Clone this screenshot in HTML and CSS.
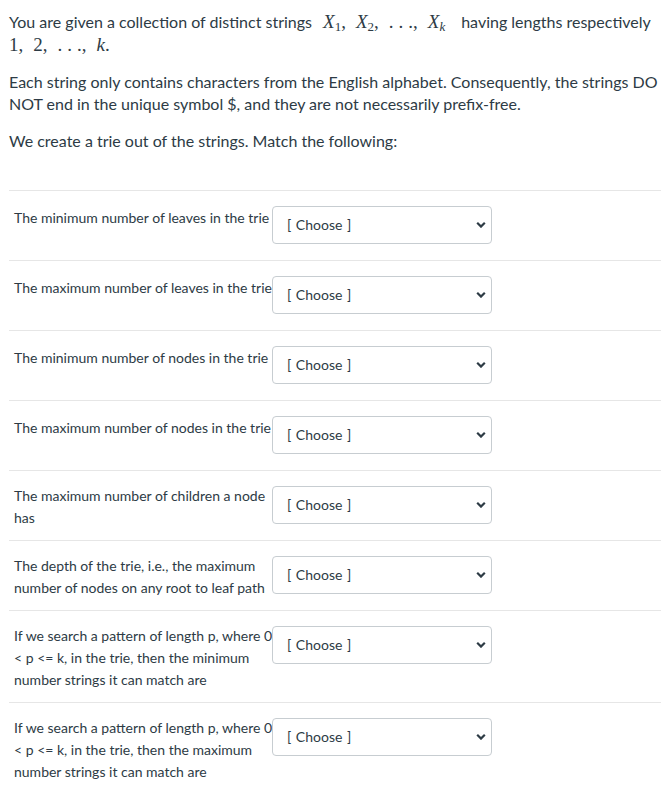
FILE: index.html
```html
<!DOCTYPE html>
<html lang="en">
<head>
<meta charset="utf-8">
<title>Trie matching question</title>
<link rel="stylesheet" href="styles.css">
</head>
<body>
<div class="question">
  <div class="text">
    <p class="first">You are given a collection of distinct strings <span class="math lead"><i>X</i><sub>1</sub><span class="c">,</span><i>X</i><sub>2</sub><span class="c">,</span><span class="dots">..</span>.<span class="c">,</span><i>X</i><sub><i>k</i></sub></span><span class="gap"></span>having lengths respectively <span class="math">1<span class="c">,</span>2<span class="c">,</span><span class="dots">..</span>.<span class="c">,</span><i>k</i>.</span></p>
    <p>Each string only contains characters from the English alphabet. Consequently, the strings DO NOT end in the unique symbol $, and they are not necessarily prefix-free.</p>
    <p>We create a trie out of the strings. Match the following:</p>
  </div>
  <div class="answers">
    <div class="row">
      <label class="lbl one">The minimum number of leaves in the trie</label>
      <div class="sel"><span>[ Choose ]</span><svg viewBox="0 0 10 6" width="10" height="6"><path d="M1.2 0.8 L5 4.6 L8.8 0.8" fill="none" stroke="#2d3b45" stroke-width="2.2"/></svg></div>
    </div>
    <div class="row">
      <label class="lbl one">The maximum number of leaves in the trie</label>
      <div class="sel"><span>[ Choose ]</span><svg viewBox="0 0 10 6" width="10" height="6"><path d="M1.2 0.8 L5 4.6 L8.8 0.8" fill="none" stroke="#2d3b45" stroke-width="2.2"/></svg></div>
    </div>
    <div class="row">
      <label class="lbl one">The minimum number of nodes in the trie</label>
      <div class="sel"><span>[ Choose ]</span><svg viewBox="0 0 10 6" width="10" height="6"><path d="M1.2 0.8 L5 4.6 L8.8 0.8" fill="none" stroke="#2d3b45" stroke-width="2.2"/></svg></div>
    </div>
    <div class="row">
      <label class="lbl one">The maximum number of nodes in the trie</label>
      <div class="sel"><span>[ Choose ]</span><svg viewBox="0 0 10 6" width="10" height="6"><path d="M1.2 0.8 L5 4.6 L8.8 0.8" fill="none" stroke="#2d3b45" stroke-width="2.2"/></svg></div>
    </div>
    <div class="row">
      <label class="lbl">The maximum number of children a node has</label>
      <div class="sel"><span>[ Choose ]</span><svg viewBox="0 0 10 6" width="10" height="6"><path d="M1.2 0.8 L5 4.6 L8.8 0.8" fill="none" stroke="#2d3b45" stroke-width="2.2"/></svg></div>
    </div>
    <div class="row">
      <label class="lbl">The depth of the trie, i.e., the maximum number of nodes on any root to leaf path</label>
      <div class="sel"><span>[ Choose ]</span><svg viewBox="0 0 10 6" width="10" height="6"><path d="M1.2 0.8 L5 4.6 L8.8 0.8" fill="none" stroke="#2d3b45" stroke-width="2.2"/></svg></div>
    </div>
    <div class="row">
      <label class="lbl">If we search a pattern of length p, where 0 &lt; p &lt;= k, in the trie, then the minimum number strings it can match are</label>
      <div class="sel"><span>[ Choose ]</span><svg viewBox="0 0 10 6" width="10" height="6"><path d="M1.2 0.8 L5 4.6 L8.8 0.8" fill="none" stroke="#2d3b45" stroke-width="2.2"/></svg></div>
    </div>
    <div class="row">
      <label class="lbl">If we search a pattern of length p, where 0 &lt; p &lt;= k, in the trie, then the maximum number strings it can match are</label>
      <div class="sel"><span>[ Choose ]</span><svg viewBox="0 0 10 6" width="10" height="6"><path d="M1.2 0.8 L5 4.6 L8.8 0.8" fill="none" stroke="#2d3b45" stroke-width="2.2"/></svg></div>
    </div>
  </div>
</div>
</body>
</html>
```

FILE: styles.css
```css
html, body {
  margin: 0;
  padding: 0;
  background: #ffffff;
}
body {
  font-family: Lato, "Open Sans", "Liberation Sans", sans-serif;
  color: #2d3b45;
  overflow: hidden;
}
.question {
  padding: 10px 0 0 9px;
}
.text {
  font-size: 16px;
  line-height: 22px;
  margin-right: -8px;
}
.text p {
  margin: 0 0 15px 0;
}
.text p.first {
  line-height: 23px;
  margin-bottom: 15px;
}
.math {
  font-family: "Liberation Serif", "DejaVu Serif", serif;
  font-size: 19px;
  line-height: 20px;
  white-space: nowrap;
}
.math.lead {
  margin-left: 7px;
}
.math sub {
  font-size: 13px;
  line-height: 0;
  vertical-align: -3px;
}
.math .c {
  margin-right: 10px;
}
.math .dots {
  letter-spacing: 5px;
}
.gap {
  display: inline-block;
  width: 16px;
}
.answers {
  margin-top: 38px;
}
.row {
  display: flex;
  align-items: flex-start;
  border-top: 1px solid #e6e6e6;
  padding: 14px 0 11px 5px;
}
.lbl {
  flex: 0 0 261px;
  margin-right: -3px;
  font-size: 14px;
  line-height: 22px;
}
.lbl.one {
  padding-top: 2px;
}
.sel {
  flex: 0 0 auto;
  box-sizing: border-box;
  width: 220px;
  height: 38px;
  margin: 1px 0 5px 0;
  border: 1px solid #c7cdd1;
  border-radius: 4px;
  display: flex;
  align-items: center;
  justify-content: space-between;
  padding: 0 5px 0 14px;
  font-size: 14px;
}
.sel span {
  position: relative;
  top: -1px;
  word-spacing: 1px;
}
```
